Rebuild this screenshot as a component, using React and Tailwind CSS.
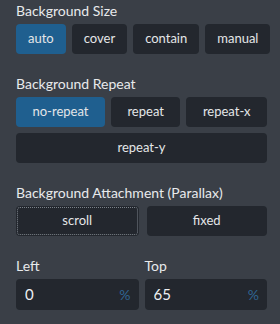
import React, { useState } from "react";

const sizes = ["auto", "cover", "contain", "manual"];
const repeats = ["no-repeat", "repeat", "repeat-x", "repeat-y"];
const attachments = ["scroll", "fixed"];

function OptionButton({ label, active, focused, onClick }) {
  return (
    <button
      onClick={onClick}
      className={`flex-auto h-[30px] px-3 rounded text-[13px] text-[#e4e6e8] ${
        active ? "bg-[#1f5f8f]" : "bg-[#23272e]"
      } ${focused ? "outline-1 outline-dotted outline-[#7c828a] -outline-offset-2" : "outline-none"}`}
    >
      {label}
    </button>
  );
}

function Heading({ children }) {
  return <div className="text-[14px] leading-[21px] text-[#e8eaec] mb-[3px]">{children}</div>;
}

function PercentInput({ label, value }) {
  return (
    <div className="flex flex-col">
      <div className="text-[14px] leading-[21px] text-[#e8eaec] mb-[3px]">{label}</div>
      <div className="flex items-center h-[31px] rounded bg-[#23272e] pl-[9px] pr-[8px]">
        <input
          defaultValue={value}
          className="flex-1 min-w-0 bg-transparent text-[15px] text-[#eef0f2] outline-none"
        />
        <span className="text-[14px] text-[#2f6592]">%</span>
      </div>
    </div>
  );
}

export default function App() {
  const [size, setSize] = useState("auto");
  const [repeat, setRepeat] = useState("no-repeat");
  const [attach, setAttach] = useState("scroll");

  return (
    <div
      className="w-[280px] h-[324px] bg-[#3a3f47] pl-4 pr-[13px] overflow-hidden"
      style={{ fontFamily: "Lato, 'Open Sans', sans-serif" }}
    >
      {/* Background Size */}
      <div>
        <Heading>Background Size</Heading>
        <div className="flex gap-[6px]">
          {sizes.map((s) => (
            <OptionButton key={s} label={s} active={size === s} onClick={() => setSize(s)} />
          ))}
        </div>
      </div>

      {/* Background Repeat */}
      <div className="mt-[19px]">
        <Heading>Background Repeat</Heading>
        <div className="flex flex-wrap gap-[6px]">
          {repeats.map((r) => (
            <OptionButton key={r} label={r} active={repeat === r} onClick={() => setRepeat(r)} />
          ))}
        </div>
      </div>

      {/* Background Attachment */}
      <div className="mt-[19px]">
        <Heading>Background Attachment (Parallax)</Heading>
        <div className="flex gap-[8px]">
          {attachments.map((a) => (
            <OptionButton key={a} label={a} focused={attach === a} onClick={() => setAttach(a)} />
          ))}
        </div>
      </div>

      {/* Position */}
      <div className="mt-[19px] grid grid-cols-2 gap-[6px]">
        <PercentInput label="Left" value="0" />
        <PercentInput label="Top" value="65" />
      </div>
    </div>
  );
}
